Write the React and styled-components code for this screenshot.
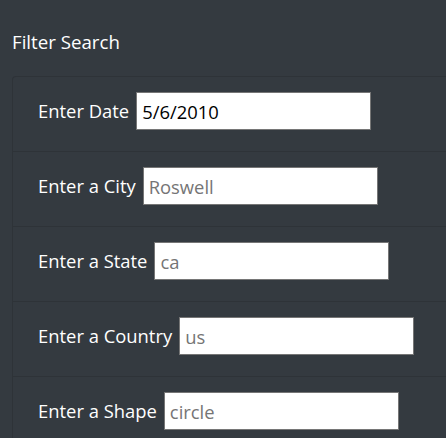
import React from 'react';
import styled, { createGlobalStyle } from 'styled-components';

const GlobalStyle = createGlobalStyle`
  html, body {
    margin: 0;
    background: #343a40;
    overflow: hidden;
  }
  body {
    font-family: "Open Sans", "Noto Sans", sans-serif;
    color: #fff;
  }
`;

const Page = styled.div`
  padding: 0 12px;
  width: 700px;
`;

const Title = styled.h5`
  margin: 0;
  height: 76px;
  display: flex;
  align-items: center;
  padding-top: 6px;
  box-sizing: border-box;
  font-size: 18.7px;
  font-weight: 400;
`;

const Card = styled.ul`
  margin: 0;
  padding: 0;
  list-style: none;
  border: 1px solid #2e3338;
  border-right: none;
  border-radius: 4px 0 0 4px;
`;

const Item = styled.li`
  display: flex;
  align-items: flex-start;
  height: 59px;
  padding: 15px 25px 0;
  border-top: ${({ first }) => (first ? 'none' : '1px solid #2e3338')};
`;

const Label = styled.label`
  font-size: 18.4px;
  line-height: 38px;
  margin-right: 7px;
`;

const Input = styled.input`
  width: 235px;
  height: 38px;
  box-sizing: border-box;
  border: 1px solid #767676;
  background: #fff;
  font-family: "Open Sans", "Noto Sans", sans-serif;
  font-size: 18.4px;
  padding: 0 5px;
  color: #000;
  outline: none;
  &::placeholder {
    color: #757575;
  }
`;

const fields = [
  { label: 'Enter Date', value: '5/6/2010' },
  { label: 'Enter a City', placeholder: 'Roswell' },
  { label: 'Enter a State', placeholder: 'ca' },
  { label: 'Enter a Country', placeholder: 'us' },
  { label: 'Enter a Shape', placeholder: 'circle' },
];

export default function App() {
  return (
    <Page>
      <GlobalStyle />
      <Title>Filter Search</Title>
      <Card>
        {fields.map((f, i) => (
          <Item key={f.label} first={i === 0}>
            <Label>{f.label}</Label>
            <Input
              type="text"
              defaultValue={f.value}
              placeholder={f.placeholder}
            />
          </Item>
        ))}
      </Card>
    </Page>
  );
}
